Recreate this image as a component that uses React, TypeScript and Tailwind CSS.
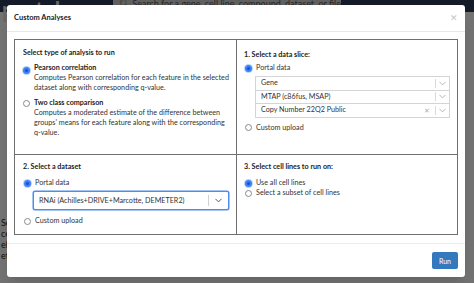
import React from "react";

const Radio = ({ checked }: { checked?: boolean }) =>
  checked ? (
    <span className="inline-flex h-[7px] w-[7px] shrink-0 items-center justify-center rounded-full bg-[#3b82f6] ring-1 ring-[#bcd4f6]">
      <span className="h-[3px] w-[3px] rounded-full bg-[#1d4ed8]" />
    </span>
  ) : (
    <span className="inline-block h-[7px] w-[7px] shrink-0 rounded-full border border-[#8a8a8a] bg-white" />
  );

const Chevron = ({ color = "#b3b3b3" }: { color?: string }) => (
  <svg width="7" height="5" viewBox="0 0 10 6" fill="none">
    <path d="M1 1l4 4 4-4" stroke={color} strokeWidth="1.4" strokeLinecap="round" strokeLinejoin="round" />
  </svg>
);

const SmallSelect = ({ label, clear, top }: { label: string; clear?: boolean; top?: boolean }) => (
  <div className={`flex h-[14.5px] items-center border border-[#d4d4d4] bg-white ${top ? "" : "-mt-px"}`}>
    <span className="flex-1 pl-[5px] text-[#333]">{label}</span>
    {clear && <span className="mr-[5px] text-[7px] text-[#b0b0b0]">✕</span>}
    <span className="h-[9px] w-px bg-[#d9d9d9]" />
    <span className="flex w-[13px] justify-center">
      <Chevron />
    </span>
  </div>
);

export default function App() {
  return (
    <div
      className="relative h-[283px] w-[474px] overflow-hidden bg-white"
      style={{ fontFamily: "Lato, 'Noto Sans', sans-serif" }}
    >
      {/* background page */}
      <div className="flex h-[12px] items-center bg-[#2e3b57]">
        <div className="w-[113px] pl-[2px] text-[22px] font-bold leading-none text-[#e6e6e6] -mt-[14px]">depmap portal</div>
        <div className="flex h-[12px] w-[228px] items-center bg-[#d6d6d6] pl-[6px] text-[9px] text-[#555] -mt-[4px]">
          🔍︎ Search for a gene, cell line, compound, dataset, or file
        </div>
        <div className="flex flex-1 items-center gap-[22px] pl-[36px] text-[9px] text-[#e0e0e0] -mt-[6px]">
          <span>Tools ▾</span>
          <span>Downloads ▾</span>
        </div>
      </div>
      <div className="pl-[1px] pt-[205px] text-[9px] leading-[11px] text-[#222]">
        <div>Sc</div>
        <div>ce</div>
        <div>ell</div>
        <div>et</div>
      </div>

      {/* overlay */}
      <div className="absolute inset-0 bg-black/55" />

      {/* modal */}
      <div className="absolute left-[7px] top-[5px] flex h-[272px] w-[458px] flex-col rounded-[3px] bg-white text-[7.2px] leading-[10px] text-[#333] shadow-lg">
        <div className="flex h-[27px] items-center justify-between border-b border-[#e8e8e8] pl-[7px] pr-[7px]">
          <span className="text-[7.5px] font-bold text-[#222]">Custom Analyses</span>
          <span className="text-[9px] text-[#c4c4c4]">✕</span>
        </div>

        <div className="px-[7px] pt-[7px] pb-[8px]">
          <div className="grid h-[196px] grid-cols-[222px_1fr] grid-rows-[115px_1fr] border border-[#6f6f6f]">
            {/* type of analysis */}
            <div className="border-b border-r border-[#6f6f6f] pl-[8px] pr-[6px] pt-[8px]">
              <div className="font-bold text-[#222]">Select type of analysis to run</div>
              <div className="mt-[5px] flex gap-[4px]">
                <div className="pt-[1.5px]">
                  <Radio checked />
                </div>
                <div>
                  <div className="font-bold text-[#222]">Pearson correlation</div>
                  <div>Computes Pearson correlation for each feature in the selected dataset along with corresponding <span className="inline-block whitespace-nowrap">q-value.</span></div>
                </div>
              </div>
              <div className="mt-[5px] flex gap-[4px]">
                <div className="pt-[1.5px]">
                  <Radio />
                </div>
                <div>
                  <div className="font-bold text-[#222]">Two class comparison</div>
                  <div>Computes a moderated estimate of the difference between groups' means for each feature along with the corresponding <span className="inline-block whitespace-nowrap">q-value.</span></div>
                </div>
              </div>
            </div>

            {/* data slice */}
            <div className="border-b border-[#6f6f6f] pl-[7px] pr-[7px] pt-[10px]">
              <div className="font-bold text-[#222]">1. Select a data slice:</div>
              <div className="mt-[3px] flex items-center gap-[4px] pl-[1px]">
                <Radio checked />
                <span>Portal data</span>
              </div>
              <div className="ml-[11px] mt-[3px] flex flex-col">
                <SmallSelect label="Gene" top />
                <SmallSelect label="MTAP (c86fus, MSAP)" />
                <SmallSelect label="Copy Number 22Q2 Public" clear />
              </div>
              <div className="mt-[5px] flex items-center gap-[4px] pl-[1px]">
                <Radio />
                <span>Custom upload</span>
              </div>
            </div>

            {/* dataset */}
            <div className="border-r border-[#6f6f6f] pl-[8px] pr-[7px] pt-[7px]">
              <div className="font-bold text-[#222]">2. Select a dataset</div>
              <div className="mt-[6px] flex items-center gap-[4px] pl-[1px]">
                <Radio checked />
                <span>Portal data</span>
              </div>
              <div className="ml-[10px] mt-[3px] flex h-[19px] items-center rounded-[2px] border border-[#4a8ef0] bg-white shadow-[0_0_0_0.5px_#4a8ef0]">
                <span className="flex-1 pl-[5px] text-[#333]">RNAi (Achilles+DRIVE+Marcotte, DEMETER2)</span>
                <span className="h-[11px] w-px bg-[#d0d0d0]" />
                <span className="flex w-[19px] justify-center">
                  <Chevron color="#555" />
                </span>
              </div>
              <div className="mt-[6px] flex items-center gap-[4px] pl-[1px]">
                <Radio />
                <span>Custom upload</span>
              </div>
            </div>

            {/* cell lines */}
            <div className="pl-[7px] pr-[7px] pt-[7px]">
              <div className="font-bold text-[#222]">3. Select cell lines to run on:</div>
              <div className="mt-[6px] flex items-center gap-[4px] pl-[1px]">
                <Radio checked />
                <span>Use all cell lines</span>
              </div>
              <div className="flex items-center gap-[4px] pl-[1px]">
                <Radio />
                <span>Select a subset of cell lines</span>
              </div>
            </div>
          </div>
        </div>

        <div className="flex flex-1 items-center justify-end border-t border-[#ececec] pr-[7px]">
          <button className="flex h-[17px] w-[26px] items-center justify-center rounded-[2px] bg-[#3478be] text-[7px] text-white">
            Run
          </button>
        </div>
      </div>
    </div>
  );
}
